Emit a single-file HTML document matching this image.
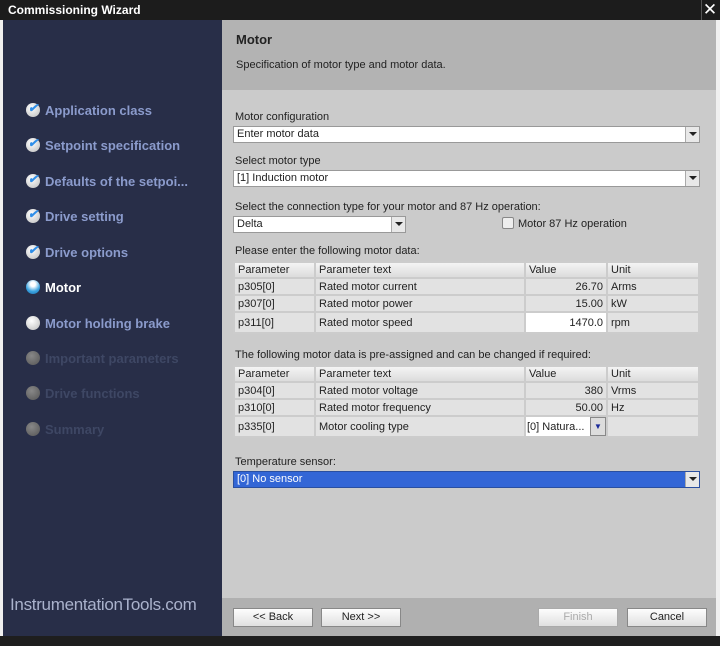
<!DOCTYPE html><html><head><style>
*{margin:0;padding:0;box-sizing:border-box}
body{width:720px;height:646px;position:relative;background:#f0f0f0;font-family:"Liberation Sans",sans-serif;font-size:11px;color:#222;overflow:hidden}
.a{position:absolute}
.nav{position:absolute;left:26px;font-size:13px;font-weight:bold;color:#8b9bcc;white-space:nowrap}
.nav i{position:absolute;left:0;top:1px;width:14px;height:14px;border-radius:50%;background:radial-gradient(circle at 40% 35%,#fff,#bbb);}
.nav span{position:absolute;left:19px;top:1px}
.dis{color:#3e4764}.dis i{background:radial-gradient(circle at 40% 35%,#888,#555)}
.chk:after{content:"✔";position:absolute;left:2px;top:-2px;color:#2f8ee8;font-size:12px}
.dd{position:absolute;background:#fff;border:1px solid #999;height:17px;padding-left:3px;line-height:15px}
.dd b{position:absolute;right:0;top:0;width:14px;height:15px;background:#e8e8e8;border-left:1px solid #aaa}
.dd b:after{content:"";position:absolute;left:3px;top:5px;border:4px solid transparent;border-top:4px solid #222;border-bottom:0}
table{position:absolute;left:233px;width:467px;border-collapse:collapse;font-size:11px}
td{border:2px solid #ccc;height:17px;padding:0 3px;background:#e2e2e2;white-space:nowrap}
tr.h td{background:linear-gradient(#f4f4f4,#dcdcdc);height:16px}
td.v{text-align:right;background:#e2e2e2}
.btn{position:absolute;top:608px;height:19px;width:80px;border:1px solid #888;background:linear-gradient(#fdfdfd,#e0e0e0);text-align:center;line-height:17px;font-size:11px}
</style></head><body>
<div class="a" style="left:0;top:0;width:720px;height:20px;background:#1c1c1c"></div>
<div class="a" style="left:8px;top:3px;color:#fff;font-weight:bold;font-size:12px">Commissioning Wizard</div>
<div class="a" style="left:701px;top:0;width:17px;height:20px;color:#fff;font-size:17px;line-height:20px;text-align:center;border-left:1px solid #555">✕</div>
<div class="a" style="left:3px;top:20px;width:219px;height:616px;background:#282e48"></div>
<div class="a" style="left:222px;top:20px;width:494px;height:70px;background:#b3b3b3"></div>
<div class="a" style="left:222px;top:90px;width:494px;height:508px;background:#cbcbcb"></div>
<div class="a" style="left:222px;top:598px;width:494px;height:38px;background:#b0b0b0"></div>
<div class="a" style="left:0;top:636px;width:720px;height:10px;background:#1e1e1e"></div>
<div class="a" style="left:236px;top:32px;font-weight:bold;font-size:13px">Motor</div>
<div class="a" style="left:236px;top:59px">Specification of motor type and motor data.</div>

<div class="nav" style="top:102px"><i class="chk"></i><span>Application class</span></div>
<div class="nav" style="top:137px"><i class="chk"></i><span>Setpoint specification</span></div>
<div class="nav" style="top:173px"><i class="chk"></i><span>Defaults of the setpoi...</span></div>
<div class="nav" style="top:208px"><i class="chk"></i><span>Drive setting</span></div>
<div class="nav" style="top:244px"><i class="chk"></i><span>Drive options</span></div>
<div class="nav" style="top:279px;color:#fff"><i style="background:radial-gradient(circle at 50% 30%,#fff 20%,#3aa3e0 60%,#1d6fb0)"></i><span>Motor</span></div>
<div class="nav" style="top:315px"><i></i><span>Motor holding brake</span></div>
<div class="nav dis" style="top:350px"><i></i><span>Important parameters</span></div>
<div class="nav dis" style="top:385px"><i></i><span>Drive functions</span></div>
<div class="nav dis" style="top:421px"><i></i><span>Summary</span></div>
<div class="a" style="left:10px;top:595px;color:#aab2cc;font-size:17px;letter-spacing:-0.3px">InstrumentationTools.com</div>

<div class="a" style="left:235px;top:111px">Motor configuration</div>
<div class="dd" style="left:233px;top:126px;width:467px">Enter motor data<b></b></div>
<div class="a" style="left:235px;top:155px">Select motor type</div>
<div class="dd" style="left:233px;top:170px;width:467px">[1] Induction motor<b></b></div>
<div class="a" style="left:235px;top:201px">Select the connection type for your motor and 87 Hz operation:</div>
<div class="dd" style="left:233px;top:216px;width:173px">Delta<b></b></div>
<div class="a" style="left:502px;top:217px;width:12px;height:12px;border:1px solid #888;background:#eee;border-radius:2px"></div>
<div class="a" style="left:518px;top:218px">Motor 87 Hz operation</div>
<div class="a" style="left:235px;top:245px">Please enter the following motor data:</div>
<table style="top:261px"><colgroup><col style="width:81px"><col style="width:210px"><col style="width:82px"><col></colgroup>
<tr class="h"><td>Parameter</td><td>Parameter text</td><td>Value</td><td>Unit</td></tr>
<tr><td>p305[0]</td><td>Rated motor current</td><td class="v">26.70</td><td>Arms</td></tr>
<tr><td>p307[0]</td><td>Rated motor power</td><td class="v">15.00</td><td>kW</td></tr>
<tr><td style="height:21px">p311[0]</td><td>Rated motor speed</td><td class="v" style="background:#fff">1470.0</td><td>rpm</td></tr></table>
<div class="a" style="left:235px;top:349px">The following motor data is pre-assigned and can be changed if required:</div>
<table style="top:365px"><colgroup><col style="width:81px"><col style="width:210px"><col style="width:82px"><col></colgroup>
<tr class="h"><td>Parameter</td><td>Parameter text</td><td>Value</td><td>Unit</td></tr>
<tr><td>p304[0]</td><td>Rated motor voltage</td><td class="v">380</td><td>Vrms</td></tr>
<tr><td>p310[0]</td><td>Rated motor frequency</td><td class="v">50.00</td><td>Hz</td></tr>
<tr><td style="height:21px">p335[0]</td><td>Motor cooling type</td><td style="background:#fff;position:relative;padding:0 1px">[0] Natura...<span style="position:absolute;right:0;top:0;width:16px;height:19px;background:#ddd;border:1px solid #888;color:#1a2a9a;font-size:8px;text-align:center;line-height:17px">▼</span></td><td></td></tr></table>
<div class="a" style="left:235px;top:456px">Temperature sensor:</div>
<div class="dd" style="left:233px;top:471px;width:467px;background:#3366d6;color:#fff;border-color:#2a4fa0">[0] No sensor<b></b></div>

<div class="btn" style="left:233px">&lt;&lt; Back</div>
<div class="btn" style="left:321px">Next &gt;&gt;</div>
<div class="btn" style="left:538px;color:#aaa;border-color:#aaa">Finish</div>
<div class="btn" style="left:627px">Cancel</div>
</body></html>
